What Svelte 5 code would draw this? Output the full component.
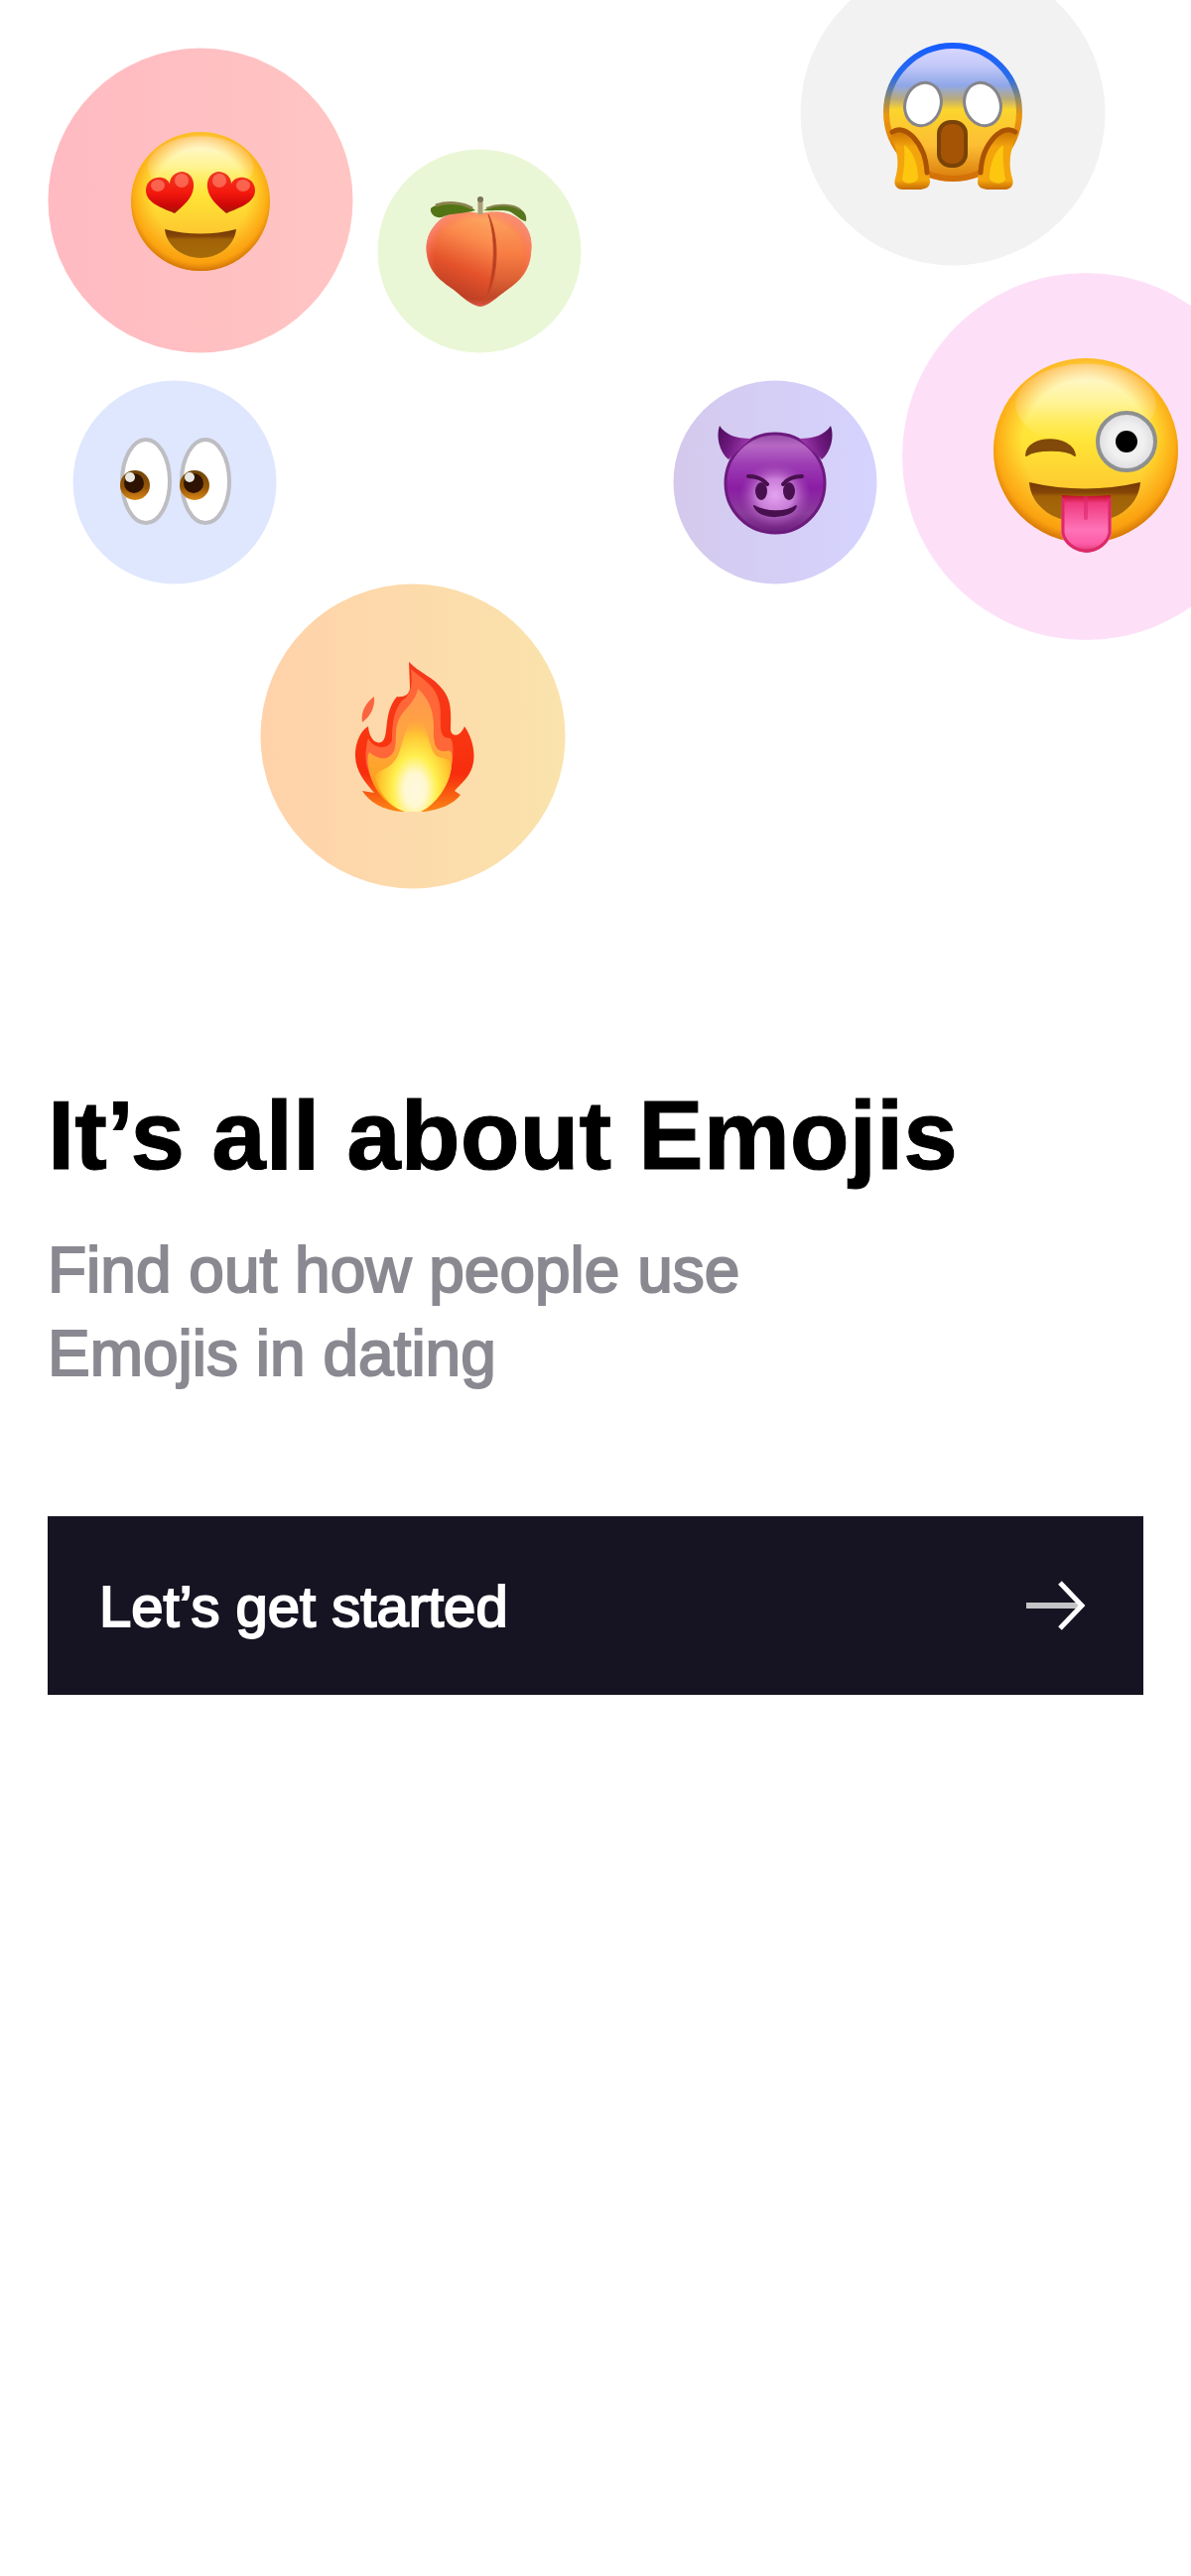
<script lang="ts">
  // Landing screen: a loose cloud of emoji bubbles above the intro copy and the start button.
  let { onstart = () => {} }: { onstart?: () => void } = $props();

  // Bubble centres and radii, in scene units
  const bubbles = [
    { cx: 202, cy: 202, r: 153.5, fill: 'url(#rose)' },
    { cx: 483, cy: 253, r: 102.5, fill: '#eaf7d6' },
    { cx: 960, cy: 114, r: 153.5, fill: '#f2f2f2' },
    { cx: 176, cy: 486, r: 102.5, fill: '#dfe7ff' },
    { cx: 781, cy: 486, r: 102.5, fill: 'url(#lilac)' },
    { cx: 1094, cy: 460, r: 185, fill: '#fde0f8' },
    { cx: 416, cy: 742, r: 153.5, fill: 'url(#apricot)' },
  ];
</script>

{#snippet face(cx: number, cy: number, r: number)}
  <circle {cx} {cy} {r} fill="url(#skin)" />
  <ellipse {cx} cy={cy - r * 0.5} rx={r * 0.76} ry={r * 0.44} fill="url(#shine)" />
  <circle {cx} {cy} {r} fill="url(#rim)" />
{/snippet}

{#snippet heart()}
  <path d="M128 167C117 162 99 157 99 144C99 134 108 130 115 131C120 132 122 135 123 137C123 130 129 125 136 125C144 126 148 133 147 141C146 152 136 160 128 167Z" fill="url(#heart)" />
  <ellipse cx="111" cy="139" rx="7" ry="6" fill="#ff7d66" opacity="0.7" />
  <ellipse cx="135" cy="134" rx="7" ry="7" fill="#ff7d66" opacity="0.7" />
{/snippet}

{#snippet hand()}
  <path d="M897 133C902 127 912 129 918 134C928 142 933 154 935 166L937 183C937 189 932 191 925 191H910C903 191 900 186 902 180C905 170 905 161 903 152Z" fill="url(#hand)" />
  <path d="M899 133C906 128 914 132 920 138C929 148 933 158 934 174" fill="none" stroke="#ab5304" stroke-width="5" stroke-linecap="round" />
  <path d="M911 146C919 151 925 164 925 180C922 186 911 186 909 181C911 170 912 158 911 146Z" fill="#ffcf12" opacity="0.8" />
{/snippet}

{#snippet eye(cx: number)}
  <ellipse {cx} cy="485" rx="24" ry="42" fill="#fff" stroke="#bdbdc2" stroke-width="4" />
  <circle cx={cx - 11} cy="489" r="15" fill="url(#iris)" />
  <circle cx={cx - 12} cy="487" r="10" fill="#2e1300" />
  <circle cx={cx - 16} cy="481" r="5" fill="#e9e8e4" />
{/snippet}

{#snippet devilHalf()}
  <path d="M725 429C731 438 741 442 757 442L734 463C725 456 721 440 725 429Z" fill="url(#horn)" />
{/snippet}

{#snippet devilEye()}
  <ellipse cx="767" cy="495" rx="6" ry="9" fill="#48104f" />
  <path d="M754 480C762 480 769 483 773 488" fill="none" stroke="#48104f" stroke-width="4" stroke-linecap="round" />
{/snippet}

<main class="landing">
  <svg class="scene" viewBox="0 0 1200 896" aria-hidden="true">
    <defs>
      <linearGradient id="rose">
        <stop offset="0" stop-color="#ffbac2" />
        <stop offset="1" stop-color="#ffc5c3" />
      </linearGradient>
      <linearGradient id="lilac">
        <stop offset="0" stop-color="#d4c9ec" />
        <stop offset="1" stop-color="#d5d3ff" />
      </linearGradient>
      <linearGradient id="apricot">
        <stop offset="0" stop-color="#ffd2aa" />
        <stop offset="1" stop-color="#fae3ac" />
      </linearGradient>
      <linearGradient id="skin" x2="0" y2="1">
        <stop offset="0" stop-color="#ffec5c" />
        <stop offset="0.45" stop-color="#ffe436" />
        <stop offset="0.75" stop-color="#fdc62f" />
        <stop offset="1" stop-color="#f5a414" />
      </linearGradient>
      <radialGradient id="rim" cy="0.46" r="0.55">
        <stop offset="0.62" stop-color="#ffa60d" stop-opacity="0" />
        <stop offset="0.88" stop-color="#fb9d0b" stop-opacity="0.8" />
        <stop offset="1" stop-color="#c9690a" />
      </radialGradient>
      <linearGradient id="shine" x2="0" y2="1">
        <stop offset="0" stop-color="#fff9e6" />
        <stop offset="0.5" stop-color="#fff6a6" stop-opacity="0.8" />
        <stop offset="1" stop-color="#ffee58" stop-opacity="0" />
      </linearGradient>
      <linearGradient id="heart" x2="0" y2="1">
        <stop offset="0" stop-color="#ee3a25" />
        <stop offset="0.5" stop-color="#f4190d" />
        <stop offset="0.8" stop-color="#cf0808" />
        <stop offset="1" stop-color="#a01808" />
      </linearGradient>
      <linearGradient id="mouth" x2="0" y2="1">
        <stop offset="0" stop-color="#713806" />
        <stop offset="0.25" stop-color="#854507" />
        <stop offset="0.35" stop-color="#a06207" />
        <stop offset="1" stop-color="#a76b0a" />
      </linearGradient>
      <linearGradient id="scream" x2="0" y2="1">
        <stop offset="0" stop-color="#d9d8ff" />
        <stop offset="0.15" stop-color="#c3c9f8" />
        <stop offset="0.3" stop-color="#8fa7e8" />
        <stop offset="0.4" stop-color="#b8aa7c" />
        <stop offset="0.48" stop-color="#fbd52d" />
        <stop offset="0.75" stop-color="#fdbd34" />
        <stop offset="1" stop-color="#d97d0b" />
      </linearGradient>
      <linearGradient id="screamRim" x2="0" y2="1">
        <stop offset="0" stop-color="#175dff" />
        <stop offset="0.24" stop-color="#2a6de9" />
        <stop offset="0.4" stop-color="#918b68" />
        <stop offset="0.52" stop-color="#eb960f" />
        <stop offset="1" stop-color="#d27008" />
      </linearGradient>
      <linearGradient id="hand" x2="0" y2="1">
        <stop offset="0" stop-color="#c36a05" />
        <stop offset="0.3" stop-color="#f3a30c" />
        <stop offset="0.85" stop-color="#f4a60c" />
        <stop offset="1" stop-color="#c66a05" />
      </linearGradient>
      <linearGradient id="peach" x1="0.75" y1="0" x2="0.3" y2="1">
        <stop offset="0" stop-color="#fdb36d" />
        <stop offset="0.35" stop-color="#fb8a4c" />
        <stop offset="0.65" stop-color="#e4522b" />
        <stop offset="1" stop-color="#ae3822" />
      </linearGradient>
      <linearGradient id="peachSide" x2="0" y2="1">
        <stop offset="0" stop-color="#fca863" />
        <stop offset="0.45" stop-color="#f87c43" />
        <stop offset="0.7" stop-color="#df6335" />
        <stop offset="1" stop-color="#b33d24" />
      </linearGradient>
      <radialGradient id="peachRim" r="0.54">
        <stop offset="0.78" stop-color="#ff6658" stop-opacity="0" />
        <stop offset="1" stop-color="#f78579" stop-opacity="0.8" />
      </radialGradient>
      <linearGradient id="iris" x2="0" y2="1">
        <stop offset="0" stop-color="#6e4307" />
        <stop offset="0.6" stop-color="#9a5707" />
        <stop offset="1" stop-color="#d98a17" />
      </linearGradient>
      <linearGradient id="horn" x2="1" y2="0.4">
        <stop offset="0" stop-color="#4c0d5a" />
        <stop offset="0.5" stop-color="#6f1a80" />
        <stop offset="1" stop-color="#a13ab0" />
      </linearGradient>
      <linearGradient id="devil" x2="0" y2="1">
        <stop offset="0" stop-color="#9349a3" />
        <stop offset="0.12" stop-color="#b668c4" />
        <stop offset="0.32" stop-color="#9c3ab3" />
        <stop offset="0.55" stop-color="#8b1da4" />
        <stop offset="0.8" stop-color="#8b3c9c" />
        <stop offset="1" stop-color="#6c1f7d" />
      </linearGradient>
      <radialGradient id="devilGlow">
        <stop offset="0" stop-color="#e4a4f0" />
        <stop offset="0.5" stop-color="#cf86dd" stop-opacity="0.9" />
        <stop offset="1" stop-color="#a34db3" stop-opacity="0" />
      </radialGradient>
      <radialGradient id="white">
        <stop offset="0.6" stop-color="#f0f0f0" />
        <stop offset="1" stop-color="#dcdce0" />
      </radialGradient>
      <linearGradient id="tongue" x2="0" y2="1">
        <stop offset="0" stop-color="#c20d25" />
        <stop offset="0.14" stop-color="#f03b80" />
        <stop offset="0.6" stop-color="#ff73b8" />
        <stop offset="0.85" stop-color="#fc5ba6" />
        <stop offset="1" stop-color="#de2e6d" />
      </linearGradient>
      <linearGradient id="flame" x2="0" y2="1">
        <stop offset="0" stop-color="#f6381c" />
        <stop offset="0.55" stop-color="#f93410" />
        <stop offset="0.75" stop-color="#f72d0e" />
        <stop offset="1" stop-color="#fb8615" />
      </linearGradient>
      <linearGradient id="flameMid" x2="0" y2="1">
        <stop offset="0" stop-color="#ff9650" />
        <stop offset="0.45" stop-color="#ffa83d" />
        <stop offset="1" stop-color="#fd9b08" />
      </linearGradient>
      <radialGradient id="flameCore" gradientUnits="userSpaceOnUse" cx="418" cy="796" r="64" gradientTransform="translate(418 796) scale(0.72 1.12) translate(-418 -796)">
        <stop offset="0" stop-color="#fff8df" />
        <stop offset="0.24" stop-color="#fff8d0" />
        <stop offset="0.48" stop-color="#fff050" />
        <stop offset="0.75" stop-color="#ffd033" stop-opacity="0.85" />
        <stop offset="1" stop-color="#ffb52a" stop-opacity="0" />
      </radialGradient>
    </defs>

    {#each bubbles as b}
      <circle cx={b.cx} cy={b.cy} r={b.r} fill={b.fill} />
    {/each}

    <!-- heart eyes -->
    <g transform="translate(48 48)">
      {@render face(154, 155, 70)}
      {@render heart()}
      <g transform="matrix(-1 0 0 1 308 0)">{@render heart()}</g>
      <path d="M118 183Q154 192 190 183C188 201 171 212 154 212C137 212 120 201 118 183Z" fill="url(#mouth)" />
    </g>

    <!-- peach -->
    <g transform="translate(-1 -1)">
      <path d="M485 216C470 213 454 214 445 222C433 232 429 245 431 257C433 275 445 284 458 293C468 301 476 309 485 310C494 309 502 300 512 293C526 284 536 272 536 254C538 238 532 227 521 220C509 213 496 214 485 216Z" fill="url(#peach)" />
      <path d="M493 216C508 212 524 219 531 230C537 239 537 249 536 257C533 275 524 284 512 293L488 309C503 294 507 246 493 216Z" fill="url(#peachSide)" />
      <path d="M485 216C470 213 454 214 445 222C433 232 429 245 431 257C433 275 445 284 458 293C468 301 476 309 485 310C494 309 502 300 512 293C526 284 536 272 536 254C538 238 532 227 521 220C509 213 496 214 485 216Z" fill="url(#peachRim)" />
      <path d="M493 217C504 238 505 280 488 307C499 282 502 246 493 217Z" fill="#b73d20" stroke="#c34c28" stroke-width="1" />
      <path d="M480 213C468 204 443 204 435 211C434 217 440 221 446 220C456 215 467 217 480 213Z" fill="#527414" />
      <path d="M440 208C452 204 467 205 477 211" fill="none" stroke="#8b8350" stroke-width="3" />
      <path d="M488 213C500 207 516 206 524 211C530 214 532 219 531 224C525 223 521 217 514 214C506 212 499 214 488 213Z" fill="#56751c" />
      <path d="M491 211C503 206 518 207 525 212" fill="none" stroke="#8b8350" stroke-width="2" />
      <path d="M485 201V217" fill="none" stroke="#aa9f77" stroke-width="5" />
      <circle cx="485" cy="202" r="3" fill="#777553" />
    </g>

    <!-- screaming face -->
    <circle cx="960" cy="113" r="67" fill="url(#scream)" stroke="url(#screamRim)" stroke-width="6" />
    <ellipse cx="930" cy="105" rx="18" ry="22" transform="rotate(18 930 105)" fill="#fff" stroke="#85858a" stroke-width="3" />
    <ellipse cx="990" cy="105" rx="18" ry="22" transform="rotate(-18 990 105)" fill="#fff" stroke="#85858a" stroke-width="3" />
    <rect x="946" y="123" width="27" height="44" rx="12" fill="#a55406" stroke="#7a4307" stroke-width="4" />
    {@render hand()}
    <g transform="matrix(-1 0 0 1 1922 0)">{@render hand()}</g>

    <!-- eyes -->
    {@render eye(147)}
    {@render eye(207)}

    <!-- devil -->
    <circle cx="781" cy="487" r="50" fill="url(#devil)" stroke="#6c1a7d" stroke-width="3" />
    <ellipse cx="781" cy="499" rx="36" ry="33" fill="url(#devilGlow)" />
    {@render devilHalf()}
    {@render devilEye()}
    <g transform="matrix(-1 0 0 1 1562 0)">
      {@render devilHalf()}
      {@render devilEye()}
    </g>
    <path d="M760 510C770 517 793 517 802 510C798 523 765 524 760 510Z" fill="#48104f" stroke="#48104f" stroke-width="2" stroke-linejoin="round" />

    <!-- winking face -->
    {@render face(1094, 454, 93)}
    <path d="M1034 459C1035 438 1080 438 1083 459C1074 452 1044 452 1034 459Z" fill="#81490a" stroke="#81490a" stroke-width="2" stroke-linejoin="round" />
    <circle cx="1135" cy="445" r="29" fill="url(#white)" stroke="#8d8f90" stroke-width="4" />
    <circle cx="1135" cy="445" r="11" fill="#000" />
    <path d="M1037 486Q1093 499 1149 486C1147 512 1122 527 1093 527C1064 527 1039 512 1037 486Z" fill="url(#mouth)" />
    <path d="M1070 499Q1094 501 1119 499L1120 537C1118 548 1107 556 1095 557C1082 556 1071 548 1069 537Z" fill="url(#tongue)" />
    <path d="M1071 502L1071 537C1073 547 1083 555 1095 555C1106 555 1116 547 1118 537L1118 502" fill="none" stroke="#dc2a67" stroke-width="3" />
    <path d="M1094 502V522" stroke="#de286b" stroke-width="4" stroke-linecap="round" opacity="0.6" />

    <!-- fire -->
    <path d="M377 702C370 707 363 716 365 728C373 722 378 713 377 702Z" fill="#fa6540" />
    <path d="M412 667C422 678 437 682 447 696C456 708 454 722 454 736C455 742 463 744 468 732C475 742 479 756 477 768C475 782 465 789 458 797L464 801C457 810 444 816 427 818H405C386 817 372 808 365 797L377 799C368 788 357 777 358 758C359 746 364 736 371 732C372 744 378 750 384 748C393 744 385 719 400 702C405 703 413 701 413 693Z" fill="url(#flame)" />
    <path d="M414 674C424 684 440 690 443 710C446 725 439 745 454 744C459 752 455 770 454 778C450 795 440 809 424 818H408C391 814 375 793 370 773C367 762 369 751 371 744C377 755 391 756 395 746C395 728 397 716 405 706C414 701 416 690 414 674Z" fill="#ff6638" />
    <path d="M421 694C432 704 437 716 437 733C436 752 440 758 449 757C454 755 457 758 455 771C453 791 439 811 424 818H408C390 813 376 796 372 777C370 768 370 762 372 758C383 767 392 766 397 757C401 746 396 733 404 721C410 712 419 706 421 694Z" fill="url(#flameMid)" />
    <path d="M420 718C432 732 431 754 440 762C449 766 455 763 455 773C453 791 439 811 424 818H408C392 813 381 798 378 782C382 774 392 777 400 763C407 750 407 731 420 718Z" fill="url(#flameCore)" />
  </svg>

  <section class="intro">
    <h1>It’s all about Emojis</h1>
    <p>Find out how people use<br />Emojis in dating</p>
    <button type="button" onclick={onstart}>
      <span>Let’s get started</span>
      <svg class="arrow" viewBox="0 0 72 56" aria-hidden="true">
        <path class="shaft" d="M2 28H58" />
        <path d="M36 5L58 28L36 51" />
      </svg>
    </button>
  </section>
</main>

<style>
  :global(body) {
    margin: 0;
    background: #fff;
  }
  .landing {
    font-family: "Liberation Sans", Arial, sans-serif;
    overflow: hidden;
  }
  .scene {
    display: block;
    width: 100%;
    height: auto;
  }
  .intro {
    display: flex;
    flex-direction: column;
    padding: 192px 48px 48px;
  }
  h1 {
    margin: 0;
    font-size: 98px;
    line-height: 112px;
    font-weight: 700;
    color: #000;
    -webkit-text-stroke: 1px #000;
  }
  p {
    margin: 38px 0 122px;
    font-size: 64px;
    line-height: 84px;
    color: #8a8991;
    /* medium weight */
    -webkit-text-stroke: 2px #8a8991;
  }
  button {
    display: flex;
    align-items: center;
    justify-content: space-between;
    height: 180px;
    padding: 0 48px 0 52px;
    border: 0;
    border-radius: 0;
    background: #161422;
    color: #fff;
    font-family: inherit;
    font-size: 58px;
    cursor: pointer;
    -webkit-text-stroke: 2px #fff;
  }
  .arrow {
    width: 72px;
    height: 56px;
    fill: none;
    stroke: #fff;
    stroke-width: 5;
  }
  .shaft {
    stroke: #c4c4c8;
    stroke-width: 6;
  }
</style>
